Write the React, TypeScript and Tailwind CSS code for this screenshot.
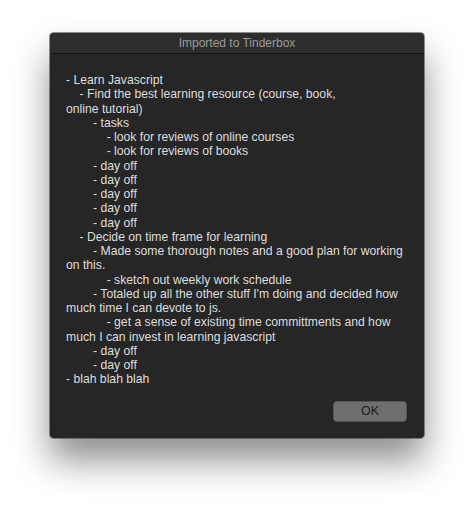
const lines = [
  '- Learn Javascript',
  '    - Find the best learning resource (course, book,',
  'online tutorial)',
  '        - tasks',
  '            - look for reviews of online courses',
  '            - look for reviews of books',
  '        - day off',
  '        - day off',
  '        - day off',
  '        - day off',
  '        - day off',
  '    - Decide on time frame for learning',
  '        - Made some thorough notes and a good plan for working',
  'on this.',
  '            - sketch out weekly work schedule',
  "        - Totaled up all the other stuff I'm doing and decided how",
  'much time I can devote to js.',
  '            - get a sense of existing time committments and how',
  'much I can invest in learning javascript',
  '        - day off',
  '        - day off',
  '- blah blah blah',
]

export default function App() {
  return (
    <div className="min-h-[505px] w-[474px] bg-white pt-[33px] pl-[50px] font-['Liberation_Sans',Arial,sans-serif]">
      {/* Dialog */}
      <div className="flex h-[405px] w-[374px] flex-col overflow-hidden rounded-[4px] bg-[#262626] shadow-[0_22px_36px_rgba(0,0,0,0.45)] ring-1 ring-[#4a4a4a]/60">
        {/* Title bar */}
        <div className="flex h-[21px] shrink-0 items-center justify-center border-b border-[#141414] bg-[#2d2d2d] text-[12px] text-[#9b9b9b]">
          Imported to Tinderbox
        </div>

        {/* Body */}
        <div className="flex-1 pl-[16px] pt-[19px] pr-[10px]">
          <div className="whitespace-pre text-[12.2px] leading-[14.25px] text-[#dedede]">
            {lines.join('\n')}
          </div>
        </div>

        {/* Footer */}
        <div className="flex justify-end pr-[17px] pb-[16px]">
          <button className="flex h-[21px] w-[74px] items-center justify-center rounded-[4px] border border-[#575757] bg-[#6f6f6f] text-[12.5px] text-[#1c1c1c]">
            OK
          </button>
        </div>
      </div>
    </div>
  )
}
